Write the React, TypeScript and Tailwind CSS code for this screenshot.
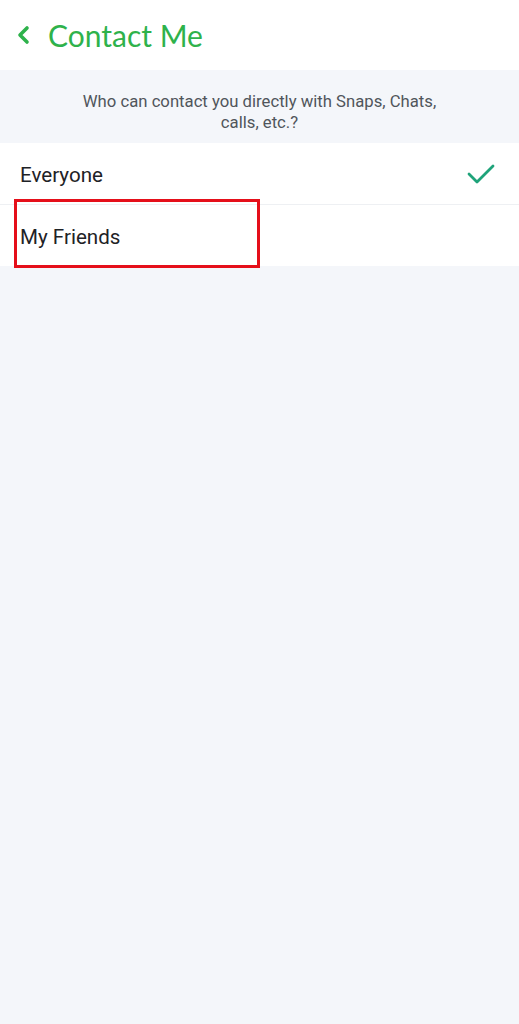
import React from "react";

export default function App() {
  return (
    <div className="min-h-[1024px] w-full bg-[#f4f6fa]" style={{ fontFamily: "Roboto, 'Liberation Sans', sans-serif" }}>
      <header className="flex h-[70px] items-center bg-white pl-[16px]">
        <svg width="16" height="20" viewBox="0 0 16 20" className="mr-[16px]">
          <path d="M11 3 L4 10 L11 17" fill="none" stroke="#2eb24b" strokeWidth="3.6" strokeLinecap="round" strokeLinejoin="round" />
        </svg>
        <h1 className="text-[30px] leading-none text-[#2eb24b]" style={{ fontFamily: "Lato, 'Noto Sans', sans-serif" }}>
          Contact Me
        </h1>
      </header>
      <div className="flex h-[73px] items-center justify-center pt-[11px]">
        <p className="w-[372px] text-center text-[16.7px] leading-[21px] text-[#50555b]">
          Who can contact you directly with Snaps, Chats, calls, etc.?
        </p>
      </div>
      <div className="bg-white">
        <div className="flex h-[62px] items-center justify-between border-b border-[#eef0f3] pl-[20px] pr-[24px] pt-[4px]">
          <span className="text-[20.6px] text-[#1e2226]">Everyone</span>
          <svg width="28" height="22" viewBox="0 0 28 22" className="mt-[-4px]">
            <path d="M2 11 L10 19 L26 3" fill="none" stroke="#1fa37a" strokeWidth="2.8" strokeLinecap="round" strokeLinejoin="round" />
          </svg>
        </div>
        <div className="relative flex h-[61px] items-center pl-[20px] pt-[3px]">
          <span className="text-[20.6px] text-[#1e2226]">My Friends</span>
          <div className="absolute left-[14px] top-[-6px] h-[69px] w-[246px] border-[3px] border-[#e50f1a]" />
        </div>
      </div>
    </div>
  );
}
